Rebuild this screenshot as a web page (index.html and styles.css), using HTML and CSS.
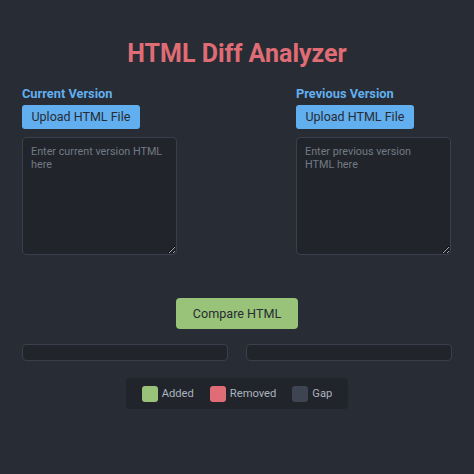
FILE: index.html
```html
<!DOCTYPE html>
<html lang="en">
<head>
<meta charset="utf-8">
<title>HTML Diff Analyzer</title>
<link rel="stylesheet" href="styles.css">
</head>
<body>
<main class="app">
  <h1 class="title">HTML Diff Analyzer</h1>

  <section class="inputs">
    <div class="column">
      <label class="column-label" for="current">Current Version</label>
      <button class="upload-btn" type="button">Upload HTML File</button>
      <textarea id="current" class="source" placeholder="Enter current version HTML here"></textarea>
    </div>
    <div class="column">
      <label class="column-label" for="previous">Previous Version</label>
      <button class="upload-btn" type="button">Upload HTML File</button>
      <textarea id="previous" class="source" placeholder="Enter previous version HTML here"></textarea>
    </div>
  </section>

  <div class="actions">
    <button class="compare-btn" type="button">Compare HTML</button>
  </div>

  <section class="results">
    <pre class="result-pane"></pre>
    <pre class="result-pane"></pre>
  </section>

  <div class="legend-row">
    <ul class="legend">
      <li class="legend-item"><span class="swatch swatch-added"></span>Added</li>
      <li class="legend-item"><span class="swatch swatch-removed"></span>Removed</li>
      <li class="legend-item"><span class="swatch swatch-gap"></span>Gap</li>
    </ul>
  </div>
</main>
</body>
</html>
```

FILE: styles.css
```css
* {
  box-sizing: border-box;
}

html,
body {
  margin: 0;
  background: #282c34;
}

body {
  font-family: Roboto, "Noto Sans", sans-serif;
  color: #abb2bf;
}

.app {
  padding: 38px 22px 0;
}

.title {
  margin: 0;
  text-align: center;
  font-size: 25px;
  font-weight: 700;
  line-height: 32px;
  color: #e06c75;
}

/* two source columns, pushed to the edges */
.inputs {
  display: flex;
  justify-content: space-between;
  margin-top: 16px;
  padding-right: 1px;
}

.column {
  display: flex;
  flex-direction: column;
  align-items: flex-start;
}

.column-label {
  font-size: 12.8px;
  font-weight: 700;
  line-height: 15px;
  color: #61afef;
}

.upload-btn {
  margin-top: 4px;
  padding: 4px 9.5px;
  border: 0;
  border-radius: 3px;
  background: #61afef;
  color: #282c34;
  font: 12.5px/16px Roboto, sans-serif;
}

.source {
  margin-top: 8px;
  width: 155px;
  height: 118px;
  padding: 8px;
  border: 1px solid #3a3f4b;
  border-radius: 4px;
  background: #21252b;
  color: #abb2bf;
  font: 10.8px/12.5px Roboto, sans-serif;
}

.source::placeholder {
  color: #737984;
}

.actions {
  display: flex;
  justify-content: center;
  margin-top: 43px;
}

.compare-btn {
  padding: 8px 16.5px;
  border: 0;
  border-radius: 4px;
  background: #98c379;
  color: #282c34;
  font: 12.6px/15px Roboto, sans-serif;
}

/* side-by-side diff output */
.results {
  display: flex;
  gap: 18px;
  margin-top: 15px;
}

.result-pane {
  flex: 1;
  height: 17px;
  margin: 0;
  border: 1px solid #3a3f4b;
  border-radius: 4px;
  background: #21252b;
}

.legend-row {
  display: flex;
  justify-content: center;
  margin-top: 17px;
}

.legend {
  display: flex;
  gap: 16px;
  margin: 0;
  padding: 7.5px 16px;
  list-style: none;
  border-radius: 4px;
  background: #21252b;
}

.legend-item {
  display: flex;
  align-items: center;
  gap: 4px;
  font-size: 11.2px;
  line-height: 16px;
  color: #abb2bf;
}

.swatch {
  width: 16px;
  height: 16px;
  border-radius: 3px;
}

.swatch-added {
  background: #98c379;
}

.swatch-removed {
  background: #e06c75;
}

.swatch-gap {
  background: #3e4451;
}
```
